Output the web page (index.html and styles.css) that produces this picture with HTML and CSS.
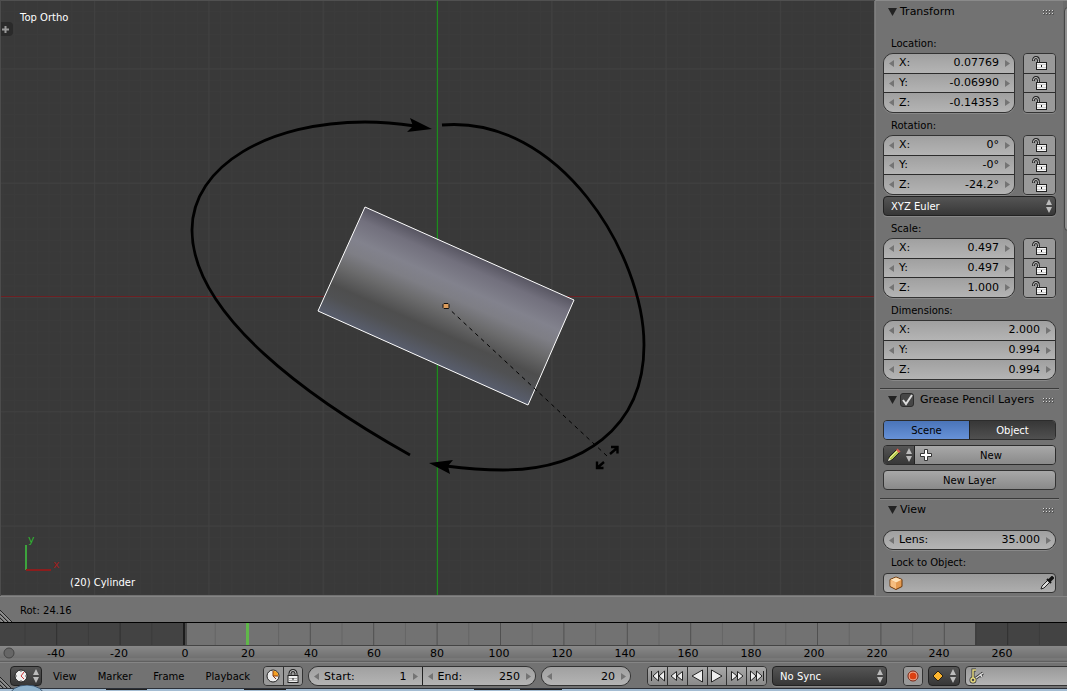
FILE: index.html
```html
<!DOCTYPE html>
<html lang="en">
<head>
  <meta charset="UTF-8">
  <meta name="viewport" content="width=device-width, initial-scale=1.0">
  <title>Blender</title>
  <link rel="stylesheet" href="styles.css">
</head>
<body>
  <!-- shared icons -->
  <svg class="defs" width="0" height="0" aria-hidden="true">
    <symbol id="left" viewBox="0 0 5 7"><path d="M5 0v7L0 3.500z"/></symbol>
    <symbol id="right" viewBox="0 0 5 7"><path d="M0 0v7l5-3.500z"/></symbol>
    <symbol id="updown" viewBox="0 0 6 14"><path d="M3 0l3 6H0zM0 8h6l-3 6z"/></symbol>
    <symbol id="grip" viewBox="0 0 11 5">
      <path d="M0 1h2M3 1h2M6 1h2M9 1h2M0 4h2M3 4h2M6 4h2M9 4h2" stroke="#3f3f3f"/>
      <path d="M0 .5h1M3 .5h1M6 .5h1M9 .5h1M0 3.500h1M3 3.500h1M6 3.500h1M9 3.500h1" stroke="#d8d8d8"/>
    </symbol>
    <symbol id="unlock" viewBox="0 0 16 16">
      <path d="M1.500 6V5Q1.500 2.500 4 2.500Q6.500 2.500 6.500 5.500V9" fill="none" stroke="#222" stroke-width="2.800"/>
      <path d="M1.500 5.500V5Q1.500 2.500 4 2.500Q6.500 2.500 6.500 5.500V9" fill="none" stroke="#ccc" stroke-width="1"/>
      <rect x="4.500" y="7.500" width="10" height="7" fill="#f4f4f4" stroke="#222"/>
      <path d="M5 9.500h9M5 12.500h9" stroke="#ccc"/>
      <path d="M9.500 10v2" stroke="#111"/>
    </symbol>
    <symbol id="corner" viewBox="0 0 12 12">
      <path d="M0 0l12 12M0 4l8 8M0 8l4 4" stroke="#222"/>
      <path d="M0 1.500l10.500 10.500M0 5.500l6.500 6.500M0 9.500l2.500 2.500" stroke="#aaa"/>
    </symbol>
  </svg>

  <div class="workspace">
    <main class="viewport">
      <svg width="100%" height="100%" role="img" aria-label="3D view">
        <defs>
          <pattern id="minor" x="437" y="297" width="11.430" height="11.430" patternUnits="userSpaceOnUse">
            <path d="M.5 0v12M0 .5h12" stroke="#3b3b3b" fill="none"/>
          </pattern>
          <pattern id="major" x="437" y="297" width="114.300" height="114.300" patternUnits="userSpaceOnUse">
            <path d="M.5 0v115M0 .5h115" stroke="#414141" fill="none"/>
          </pattern>
          <linearGradient id="shade" gradientUnits="userSpaceOnUse" x1="365" y1="207" x2="319" y2="311">
            <stop offset="0" stop-color="#575561"/>
            <stop offset=".12" stop-color="#72707d"/>
            <stop offset=".3" stop-color="#82828d"/>
            <stop offset=".42" stop-color="#7e7e85"/>
            <stop offset=".56" stop-color="#6b6b6c"/>
            <stop offset=".74" stop-color="#4e4e4e"/>
            <stop offset=".84" stop-color="#505153"/>
            <stop offset="1" stop-color="#585d6c"/>
          </linearGradient>
        </defs>
        <rect width="100%" height="100%" fill="#393939"/>
        <rect width="100%" height="100%" fill="url(#minor)"/>
        <rect width="100%" height="100%" fill="url(#major)"/>
        <rect y="296" width="100%" height="1" fill="#6c1f22"/>
        <rect x="436" width="2" height="100%" fill="#2a502a"/>
        <rect x="437" width="1" height="100%" fill="#1f8a1f"/>
        <path d="M365 207l209 93-46 105-210-94z" fill="url(#shade)" stroke="#fff"/>

        <!-- rotation arrows -->
        <g fill="none" stroke="#000" stroke-width="2.800">
          <path d="M410 455C310 399 192 315 192 230C192 165 270 122 365 122C382 122 398 123.500 415 126"/>
          <path d="M442 125C560 115 644 255 644 345C644 430 580 470 503 470C483 470 465 468.500 446 466"/>
        </g>
        <path d="M432 129l-22-11 3 8-6 6zM429 463l24-3-5 6 2 8z"/>

        <path d="M446 306l161 150" stroke="#000" stroke-dasharray="4 4" fill="none"/>
        <path d="M444 303.500h4l1 1v3l-1 1h-4l-1-1v-3z" fill="#dc9c5c" stroke="#111"/>
        <g fill="none" stroke="#000" stroke-width="2.400">
          <path d="M610 454l7-6M611 447h6.500v6.500"/>
          <path d="M604 462l-7 6M597 461.500v6.500h6.500"/>
        </g>

        <path d="M26 545v25" stroke="#3da33d" stroke-width="2"/>
        <path d="M26 570h25" stroke="#8c1d1d" stroke-width="2"/>
        <text x="28" y="543" class="axis axis-y">y</text>
        <text x="53" y="568" class="axis axis-x">x</text>
        <text x="20" y="21" class="view-text">Top Ortho</text>
        <text x="70" y="586" class="view-text">(20) Cylinder</text>
      </svg>
      <button class="region-toggle" aria-label="Show tools"><svg width="7" height="7"><path d="M3.500 0v7M0 3.500h7" stroke="#999" stroke-width="2"/></svg></button>
    </main>

    <aside class="sidebar">
      <div class="panels">
        <section class="panel">
          <h2 class="panel-title"><svg class="fold" width="9" height="8"><path d="M0 0h9l-4.500 8z"/></svg><span>Transform</span><svg class="grip" width="11" height="5"><use href="#grip"/></svg></h2>
          <div class="caption">Location:</div>
          <div class="locked-row">
            <div class="group">
              <label class="num"><svg><use href="#left"/></svg>X:<input value="0.07769"><svg><use href="#right"/></svg></label>
              <label class="num"><svg><use href="#left"/></svg>Y:<input value="-0.06990"><svg><use href="#right"/></svg></label>
              <label class="num"><svg><use href="#left"/></svg>Z:<input value="-0.14353"><svg><use href="#right"/></svg></label>
            </div>
            <div class="locks">
              <button aria-label="Lock location X"><svg><use href="#unlock"/></svg></button>
              <button aria-label="Lock location Y"><svg><use href="#unlock"/></svg></button>
              <button aria-label="Lock location Z"><svg><use href="#unlock"/></svg></button>
            </div>
          </div>
          <div class="caption">Rotation:</div>
          <div class="locked-row">
            <div class="group">
              <label class="num"><svg><use href="#left"/></svg>X:<input value="0°"><svg><use href="#right"/></svg></label>
              <label class="num"><svg><use href="#left"/></svg>Y:<input value="-0°"><svg><use href="#right"/></svg></label>
              <label class="num"><svg><use href="#left"/></svg>Z:<input value="-24.2°"><svg><use href="#right"/></svg></label>
            </div>
            <div class="locks">
              <button aria-label="Lock rotation X"><svg><use href="#unlock"/></svg></button>
              <button aria-label="Lock rotation Y"><svg><use href="#unlock"/></svg></button>
              <button aria-label="Lock rotation Z"><svg><use href="#unlock"/></svg></button>
            </div>
          </div>
          <div class="menu rotation-mode">
            <select aria-label="Rotation mode"><option>XYZ Euler</option></select>
            <svg><use href="#updown"/></svg>
          </div>
          <div class="caption">Scale:</div>
          <div class="locked-row">
            <div class="group">
              <label class="num"><svg><use href="#left"/></svg>X:<input value="0.497"><svg><use href="#right"/></svg></label>
              <label class="num"><svg><use href="#left"/></svg>Y:<input value="0.497"><svg><use href="#right"/></svg></label>
              <label class="num"><svg><use href="#left"/></svg>Z:<input value="1.000"><svg><use href="#right"/></svg></label>
            </div>
            <div class="locks">
              <button aria-label="Lock scale X"><svg><use href="#unlock"/></svg></button>
              <button aria-label="Lock scale Y"><svg><use href="#unlock"/></svg></button>
              <button aria-label="Lock scale Z"><svg><use href="#unlock"/></svg></button>
            </div>
          </div>
          <div class="caption">Dimensions:</div>
          <div class="group">
            <label class="num"><svg><use href="#left"/></svg>X:<input value="2.000"><svg><use href="#right"/></svg></label>
            <label class="num"><svg><use href="#left"/></svg>Y:<input value="0.994"><svg><use href="#right"/></svg></label>
            <label class="num"><svg><use href="#left"/></svg>Z:<input value="0.994"><svg><use href="#right"/></svg></label>
          </div>
        </section>

        <section class="panel stacked">
          <h2 class="panel-title"><svg class="fold" width="9" height="8"><path d="M0 0h9l-4.500 8z"/></svg><label class="check"><input type="checkbox" checked><svg width="13" height="13"><path d="M3 6l3 4 6-9" fill="none" stroke="#ddd" stroke-width="2"/></svg><span>Grease Pencil Layers</span></label><svg class="grip" width="11" height="5"><use href="#grip"/></svg></h2>
          <div class="tabs">
            <button class="active">Scene</button>
            <button>Object</button>
          </div>
          <div class="new-row">
            <button class="pencil" aria-label="Grease pencil data">
              <svg width="16" height="16"><path d="M2 14l1-4 8-8 3 3-8 8z" fill="#b5c850" stroke="#222"/><path d="M4 11l7-7" stroke="#eef0a0"/><path d="M10 3l1.500-1.500 3 3L13 6z" fill="#dd5c50"/><path d="M2 14l1-3 2 2z" fill="#eed"/></svg>
              <svg width="6" height="14"><use href="#updown"/></svg>
            </button>
            <button class="new"><svg width="12" height="12"><path d="M4.500.5h3v4h4v3h-4v4h-3v-4h-4v-3h4z" fill="#fff" stroke="#333"/></svg><span>New</span></button>
          </div>
          <button class="tool">New Layer</button>
        </section>

        <section class="panel">
          <h2 class="panel-title"><svg class="fold" width="9" height="8"><path d="M0 0h9l-4.500 8z"/></svg><span>View</span><svg class="grip" width="11" height="5"><use href="#grip"/></svg></h2>
          <div class="group single">
            <label class="num"><svg><use href="#left"/></svg>Lens:<input value="35.000"><svg><use href="#right"/></svg></label>
          </div>
          <label class="caption" for="lock-object">Lock to Object:</label>
          <div class="object-field">
            <svg width="14" height="14"><path d="M7 1l6 2.500v7L7 13.500l-6-3v-7z" fill="#e49a50" stroke="#6b3608"/><path d="M7 1.500l5.500 2.200L7 6.500 1.500 3.700z" fill="#ffe2b8"/><path d="M1.500 4L7 6.500V13l-5.500-3z" fill="#f5bd80"/></svg>
            <input id="lock-object" type="text">
            <svg width="14" height="14"><path d="M1 13l1-3 6-6 2 2-6 6z" fill="#ddd" stroke="#222"/><path d="M7 3l4 4M8 5l4-4 1 1-4 4" stroke="#111" stroke-width="2" fill="none"/></svg>
          </div>
        </section>
      </div>
      <div class="scrollbar"><div class="thumb"></div></div>
    </aside>
  </div>

  <div class="status">
    <svg class="corner" width="12" height="12"><use href="#corner"/></svg>
    <span>Rot: 24.16</span>
  </div>

  <div class="timeline">
    <svg width="100%" height="22" role="img" aria-label="Timeline">
      <defs>
        <pattern id="frames20" x="183" y="0" width="63.400" height="22" patternUnits="userSpaceOnUse"><path d="M.5 0v22" stroke="#000" stroke-opacity=".3"/></pattern>
        <pattern id="frames10" x="214.700" y="0" width="63.400" height="22" patternUnits="userSpaceOnUse"><path d="M.5 0v22" stroke="#000" stroke-opacity=".12"/></pattern>
      </defs>
      <rect width="100%" height="22" fill="#434343"/>
      <rect x="186" width="789" height="22" fill="#727272"/>
      <rect width="100%" height="22" fill="url(#frames20)"/>
      <rect width="100%" height="22" fill="url(#frames10)"/>
      <rect x="183" width="2" height="22" fill="#1c1c1c"/>
      <rect x="185" width="2" height="22" fill="#4a4a4a"/>
      <rect x="246" width="3" height="22" fill="#60b74a"/>
    </svg>
    <svg class="ruler" width="100%" height="17">
      <circle cx="9" cy="7" r="5" fill="#666" stroke="#444"/>
      <g text-anchor="middle">
        <text x="56" y="11">-40</text>
        <text x="119" y="11">-20</text>
        <text x="185" y="11">0</text>
        <text x="248" y="11">20</text>
        <text x="311" y="11">40</text>
        <text x="374" y="11">60</text>
        <text x="437" y="11">80</text>
        <text x="499" y="11">100</text>
        <text x="562" y="11">120</text>
        <text x="625" y="11">140</text>
        <text x="688" y="11">160</text>
        <text x="751" y="11">180</text>
        <text x="814" y="11">200</text>
        <text x="877" y="11">220</text>
        <text x="939" y="11">240</text>
        <text x="1002" y="11">260</text>
      </g>
    </svg>
  </div>

  <footer class="header">
    <button class="dark editor-type" aria-label="Editor type">
      <svg width="14" height="14"><circle cx="7" cy="7" r="6" fill="#eee" stroke="#222"/><path d="M10 3L7 7l3 3" stroke="#c33" fill="none"/><path d="M7 2v1M7 11v1M2 7h1M11 7h1" stroke="#555"/></svg>
      <svg width="6" height="14"><use href="#updown"/></svg>
    </button>
    <nav class="menus">
      <button>View</button>
      <button>Marker</button>
      <button>Frame</button>
      <button>Playback</button>
    </nav>
    <div class="icon-row preview">
      <button aria-label="Preview range"><svg width="14" height="14"><circle cx="7" cy="7" r="6" fill="#eee" stroke="#222"/><path d="M7 7V1.500A5.500 5.500 0 0 1 12.500 7z" fill="#f5a020"/><path d="M7 2v5h5M7 7l3 3" stroke="#8a3a10" fill="none"/></svg></button>
      <button aria-label="Lock time cursor"><svg width="12" height="14"><path d="M3 7V4.500a3 3 0 0 1 6 0V7" fill="none" stroke="#222" stroke-width="3"/><path d="M3 7V4.500a3 3 0 0 1 6 0V7" fill="none" stroke="#ccc"/><rect x="1" y="6.500" width="10" height="7" fill="#eee" stroke="#222"/><path d="M2 9.500h8M2 11.500h8" stroke="#aaa"/><path d="M6 9v2" stroke="#222"/></svg></button>
    </div>
    <div class="range">
      <label class="num"><svg><use href="#left"/></svg>Start:<input value="1"><svg><use href="#right"/></svg></label>
      <label class="num"><svg><use href="#left"/></svg>End:<input value="250"><svg><use href="#right"/></svg></label>
    </div>
    <div class="range current">
      <label class="num"><svg><use href="#left"/></svg><input value="20" aria-label="Current frame"><svg><use href="#right"/></svg></label>
    </div>
    <div class="icon-row play">
      <button aria-label="First frame"><svg width="16" height="12"><path d="M1.500 1v10M8.500 1v10L3 6zM14.500 1v10L9 6z"/></svg></button>
      <button aria-label="Previous keyframe"><svg width="16" height="12"><path d="M7.500 1.500v9L2 6zM13.500 1.500v9L8 6z"/></svg></button>
      <button aria-label="Play reverse"><svg width="16" height="14"><path d="M13.500 1v12L3 7z"/></svg></button>
      <button aria-label="Play"><svg width="16" height="14"><path d="M2.500 1v12L13 7z"/></svg></button>
      <button aria-label="Next keyframe"><svg width="16" height="12"><path d="M2.500 1.500v9L8 6zM8.500 1.500v9L14 6z"/></svg></button>
      <button aria-label="Last frame"><svg width="16" height="12"><path d="M14.500 1v10M1.500 1v10L7 6zM7.500 1v10L13 6z"/></svg></button>
    </div>
    <div class="menu sync">
      <select aria-label="Sync mode"><option>No Sync</option></select>
      <svg><use href="#updown"/></svg>
    </div>
    <div class="icon-row record">
      <button aria-label="Record"><svg width="12" height="12"><circle cx="6" cy="6" r="5" fill="#f0b8a0" stroke="#7a1c08"/><circle cx="6" cy="6" r="3.500" fill="#dc4010"/></svg></button>
    </div>
    <button class="dark key-type" aria-label="Keyframe type">
      <svg width="12" height="12"><path d="M6 1l5 5-5 5-5-5z" fill="#fdb62f" stroke="#2a2010"/></svg>
      <svg width="6" height="14"><use href="#updown"/></svg>
    </button>
    <div class="keying">
      <svg width="18" height="16"><g fill="none" stroke="#333" stroke-width="3"><circle cx="5" cy="12" r="2"/><path d="M5 10V2h3M8 10l7-5M12 6l2 3"/></g><g fill="none" stroke-width="1.500"><path d="M8 10l7-5M12 6l2 3" stroke="#ddd"/><circle cx="5" cy="12" r="2" stroke="#e8dc80"/><path d="M5 10V2h3" stroke="#e8dc80"/></g></svg>
      <input type="text" aria-label="Active keying set">
    </div>
    <svg class="corner" width="12" height="12"><use href="#corner"/></svg>
  </footer>
  <!-- top edge of the desktop taskbar -->
  <div class="desktop-edge">
    <svg width="100%" height="6">
      <rect y="3" width="100%" height="1" fill="#2c3038"/>
      <rect y="4" width="100%" height="2" fill="#a4bdd3"/>
      <path d="M106 4.500h41M244 4.500h42M474 4.500h36M520 4.500h42" stroke="#222"/>
      <ellipse cx="27" cy="12" rx="18" ry="12" fill="#8fb2cc" stroke="#3c5670"/>
    </svg>
  </div>
</body>
</html>
```

FILE: styles.css
```css
* {
  box-sizing: border-box;
}
body {
  margin: 0;
  height: 100vh;
  display: flex;
  flex-direction: column;
  overflow: hidden;
  background: #727272;
  color: #000;
  font: 10px/14px "DejaVu Sans", sans-serif;
}
button, input, select {
  font: inherit;
  color: inherit;
  margin: 0;
  padding: 0;
  border: none;
  background: none;
  border-radius: 0;
}
svg {
  display: block;
  flex: none;
}
.defs {
  position: absolute;
}

/* 3D view */
.workspace {
  flex: 1;
  min-height: 0;
  display: flex;
}
.viewport {
  flex: 1;
  min-width: 0;
  position: relative;
  overflow: hidden;
  border-top: 1px solid #505050;
  border-left: 1px solid #4c4c4c;
}
.viewport > svg {
  margin: -1px 0 0 -1px;
}
.view-text {
  fill: #fff;
}
.axis {
  font-size: 11px;
}
.axis-y {
  fill: #2fb52f;
}
.axis-x {
  fill: #a02020;
}
.region-toggle {
  position: absolute;
  left: 0;
  top: 21px;
  width: 12px;
  height: 14px;
  padding-left: 1px;
  background: #2a2a2a;
  border-radius: 0 4px 4px 0;
}

/* Properties region */
.sidebar {
  width: 192px;
  display: flex;
  border-left: 1px solid #7e7e7e;
  border-top: 1px solid #8a8a8a;
  overflow: hidden;
}
.panels {
  flex: 1;
  min-width: 0;
  padding: 0 4px;
}
.panel {
  padding: 0 3px 8px;
}
.panel + .panel {
  border-top: 1px solid #3a3a3a;
  box-shadow: inset 0 1px #858585;
}
.panel-title {
  height: 22px;
  margin: 0 0 9px;
  padding: 0 2px 0 5px;
  display: flex;
  align-items: center;
  gap: 3px;
  font-size: 11px;
  font-weight: normal;
}
.fold {
  fill: #222;
}
.grip {
  margin-left: auto;
}
.check {
  flex: 1;
  display: grid;
  grid-template-columns: 14px 1fr;
  align-items: center;
  column-gap: 6px;
  white-space: nowrap;
}
.check input {
  grid-area: 1 / 1;
  appearance: none;
  width: 14px;
  height: 14px;
  background: #464646;
  border: 1px solid #2c2c2c;
  border-radius: 3px;
}
.check svg {
  grid-area: 1 / 1;
}
.caption {
  display: block;
  height: 21px;
  line-height: 24px;
  margin-top: 1px;
  padding-left: 8px;
}
.panel-title + .caption {
  height: 20px;
  line-height: 22px;
  margin-top: 10px;
}
.locked-row {
  display: flex;
  gap: 8px;
}
.locked-row .group {
  flex: 1;
}
.group {
  height: 60px;
  display: flex;
  flex-direction: column;
  border: 1px solid #333;
  border-radius: 10px;
  overflow: hidden;
  box-shadow: 0 1px #888;
}
.group.single {
  height: 20px;
}
.num {
  flex: 1;
  min-width: 0;
  min-height: 0;
  display: flex;
  align-items: center;
  padding: 0 4px 0 5px;
  font-size: 11px;
  background: linear-gradient(#a0a0a0, #b4b4b4);
}
.num + .num {
  border-top: 1px solid #2c2c2c;
}
.num svg {
  width: 5px;
  height: 7px;
  fill: #747474;
}
.num svg:first-child {
  margin-right: 5px;
}
.num input {
  flex: 1;
  min-width: 0;
  height: 14px;
  margin-right: 6px;
  text-align: right;
}
.locks {
  width: 33px;
  height: 60px;
  display: flex;
  flex-direction: column;
  border: 1px solid #333;
  border-radius: 4px;
  overflow: hidden;
  box-shadow: 0 1px #888;
}
.locks button {
  flex: 1;
  min-height: 0;
  display: grid;
  place-items: center;
  background: #999;
}
.locks button + button {
  border-top: 1px solid #2c2c2c;
}
.locks svg {
  width: 16px;
  height: 16px;
}
.menu {
  display: grid;
  align-items: center;
  height: 20px;
  color: #fff;
  background: linear-gradient(#555, #373737);
  border: 1px solid #222;
  border-radius: 4px;
  box-shadow: 0 1px #888;
}
.menu select {
  grid-area: 1 / 1;
  appearance: none;
  height: 18px;
  padding: 2px 16px 0 7px;
}
.menu svg {
  grid-area: 1 / 1;
  justify-self: end;
  margin-right: 3px;
  width: 6px;
  height: 14px;
  fill: #bbb;
  pointer-events: none;
}
.rotation-mode {
  margin-top: 1px;
}
.stacked {
  display: flex;
  flex-direction: column;
}
.tabs, .new-row {
  display: flex;
  height: 20px;
  margin-bottom: 5px;
  border: 1px solid #2c2c2c;
  border-radius: 4px;
  overflow: hidden;
}
.tabs button {
  flex: 1;
  padding-top: 2px;
  color: #fff;
  background: linear-gradient(#373737, #505050);
}
.tabs .active {
  color: #000;
  background: linear-gradient(#4a74b8, #6792d8);
  border-right: 1px solid #222;
}
.pencil {
  width: 31px;
  display: flex;
  align-items: center;
  justify-content: space-around;
  fill: #bbb;
  background: linear-gradient(#555, #373737);
  border-right: 1px solid #222;
}
.new {
  flex: 1;
  display: flex;
  align-items: center;
  padding: 0 5px;
  background: linear-gradient(#a8a8a8, #8a8a8a);
}
.new span {
  flex: 1;
  padding-top: 2px;
}
.tool {
  height: 20px;
  padding-top: 2px;
  background: linear-gradient(#a8a8a8, #8a8a8a);
  border: 1px solid #333;
  border-radius: 4px;
}
.object-field {
  height: 20px;
  margin-top: 1px;
  display: flex;
  align-items: center;
  padding: 0 1px 0 5px;
  background: linear-gradient(#999, #aeaeae);
  border: 1px solid #333;
  border-radius: 4px;
}
.object-field input {
  flex: 1;
  min-width: 0;
}
.scrollbar {
  width: 4px;
  padding-left: 1px;
  background: #6a6a6a;
}
.thumb {
  width: 8px;
  height: 224px;
  margin-top: 6px;
  background: #909090;
  border: 1px solid #444;
  border-radius: 4px;
}

/* Operator status */
.status {
  height: 27px;
  display: flex;
  align-items: center;
  gap: 8px;
  border-top: 1px solid #858585;
  border-bottom: 1px solid #000;
}
.status span {
  padding-top: 2px;
}
.corner {
  align-self: flex-end;
}

/* Timeline */
.ruler {
  font-size: 11px;
  background: linear-gradient(#888, #707070 12px, #808080 13px, #727272 14px);
  border-top: 1px solid #444;
  border-bottom: 1px solid #606060;
}
.header {
  height: 27px;
  display: flex;
  align-items: center;
  padding-left: 10px;
  border-top: 1px solid #858585;
  position: relative;
}
.header > * {
  flex: none;
}
.header .corner {
  position: absolute;
  left: 0;
  bottom: 0;
}
.dark {
  width: 32px;
  height: 20px;
  display: flex;
  align-items: center;
  justify-content: space-around;
  fill: #bbb;
  background: linear-gradient(#555, #373737);
  border: 1px solid #222;
  border-radius: 4px;
}
.menus {
  display: flex;
  gap: 21px;
  margin-left: 11px;
  padding-top: 2px;
}
.icon-row {
  height: 20px;
  display: flex;
  border: 1px solid #333;
  border-radius: 4px;
  overflow: hidden;
}
.icon-row button {
  flex: 1;
  display: grid;
  place-items: center;
  background: #999;
}
.icon-row button + button {
  border-left: 1px solid #333;
}
.preview {
  width: 40px;
  margin-left: 13px;
}
.range {
  width: 228px;
  height: 20px;
  margin-left: 5px;
  display: flex;
  border: 1px solid #333;
  border-radius: 10px;
  overflow: hidden;
}
.range .num {
  padding-top: 1px;
}
.range .num + .num {
  border-top: none;
  border-left: 1px solid #222;
}
.current {
  width: 90px;
}
.play {
  width: 120px;
  margin-left: 16px;
}
.play svg {
  fill: #eee;
  stroke: #222;
}
.play button {
  background: linear-gradient(#a8a8a8, #8a8a8a);
}
.sync {
  width: 115px;
  margin-left: 5px;
}
.record {
  width: 20px;
  margin-left: 16px;
}
.key-type {
  margin-left: 5px;
}
.header .keying {
  flex: 1;
  min-width: 0;
  height: 20px;
  margin: 0 -4px 0 5px;
  padding-left: 2px;
  display: flex;
  align-items: center;
  background: linear-gradient(#999, #b4b4b4);
  border: 1px solid #333;
  border-radius: 4px;
}
.keying input {
  flex: 1;
  min-width: 0;
}
.desktop-edge {
  height: 2px;
  display: flex;
  align-items: flex-end;
  position: relative;
}
```
